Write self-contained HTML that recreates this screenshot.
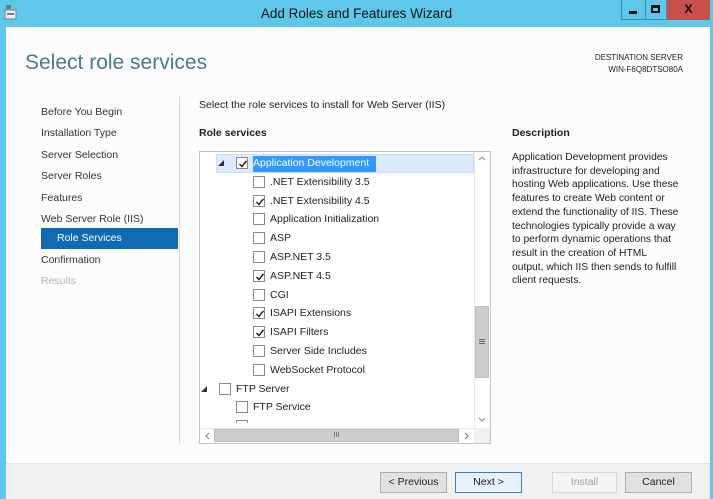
<!DOCTYPE html>
<html><head><meta charset="utf-8">
<style>
*{margin:0;padding:0;box-sizing:border-box}
body{width:713px;height:499px;overflow:hidden;background:#5fc8ea;font-family:"Liberation Sans",sans-serif;font-size:10.5px;color:#1e1e1e;position:relative}
.a{position:absolute;white-space:nowrap}
.cb{position:absolute;width:12px;height:12px;border:1px solid #8a8a8a;background:#fff}
.cb svg{position:absolute;left:1px;top:1px}
.btn{position:absolute;height:21px;border:1px solid #adadad;background:#e1e1e1;text-align:center;line-height:19px;font-size:10.5px}
</style></head><body>
<div class="a" style="left:0;top:0;width:713px;height:27px;background:#5fc8ea"></div>
<svg class="a" style="left:4px;top:4px" width="14" height="16"><rect x="2" y="1" width="5" height="4" fill="#6a7f8e"/><rect x="1" y="6" width="11" height="9" fill="#e9eef2" stroke="#6a7f8e"/><rect x="3" y="9" width="7" height="2" fill="#6a7f8e"/></svg>
<div class="a" style="left:0;top:6px;width:713px;text-align:center;font-size:13.5px;color:#111">Add Roles and Features Wizard</div>
<div class="a" style="left:621px;top:0;width:25px;height:20px;background:#5fc8ea;border:1px solid #3a8fb0;border-top:0"></div>
<div class="a" style="left:629px;top:11px;width:8px;height:3px;background:#111"></div>
<div class="a" style="left:645px;top:0;width:22px;height:20px;border:1px solid #3a8fb0;border-top:0"></div>
<div class="a" style="left:651px;top:5px;width:9px;height:8px;border:2px solid #111;border-top-width:3px"></div>
<div class="a" style="left:667px;top:0;width:43px;height:20px;background:#c7504a;color:#111;font-weight:bold;font-size:12px;text-align:center;line-height:18px">X</div>
<div class="a" style="left:6px;top:27px;width:704px;height:472px;background:#fcfcfc"></div>
<div class="a" style="left:6px;top:463px;width:704px;height:36px;background:#f0f0f0;border-top:1px solid #e3e3e3"></div>
<div class="a" style="left:25px;top:51px;font-size:21px;color:#4a7a8c">Select role services</div>
<div class="a" style="right:30px;top:52px;font-size:8px;text-align:right;line-height:12px;color:#222">DESTINATION SERVER<br>WIN-F6Q8DTSO80A</div>
<div class="a" style="left:41px;top:102px;line-height:21.4px;color:#333">Before You Begin<br>Installation Type<br>Server Selection<br>Server Roles<br>Features<br>Web Server Role (IIS)</div>
<div class="a" style="left:41px;top:228px;width:137px;height:21px;background:#0f6ab4;color:#fff;padding-left:16px;line-height:21px">Role Services</div>
<div class="a" style="left:41px;top:254px;color:#333">Confirmation</div>
<div class="a" style="left:41px;top:275px;color:#b5b5b5">Results</div>
<div class="a" style="left:179px;top:98px;width:1px;height:346px;background:#d8d8d8"></div>
<div class="a" style="left:199px;top:99px">Select the role services to install for Web Server (IIS)</div>
<div class="a" style="left:199px;top:127px;font-weight:bold">Role services</div>
<div class="a" style="left:512px;top:127px;font-weight:bold">Description</div>
<div class="a" style="left:512px;top:151px;line-height:13.7px;font-size:10.3px">Application Development provides<br>infrastructure for developing and<br>hosting Web applications. Use these<br>features to create Web content or<br>extend the functionality of IIS. These<br>technologies typically provide a way<br>to perform dynamic operations that<br>result in the creation of HTML<br>output, which IIS then sends to fulfill<br>client requests.</div>
<div class="a" style="left:199px;top:151px;width:292px;height:293px;border:1px solid #c4c4c4;background:#fff;overflow:hidden">
 <div class="a" style="left:16px;top:2px;width:258px;height:19px;background:#dcebfc;border:1px solid #c5ddf8"></div>
 <div class="a" style="left:53px;top:4px;height:16px;background:#3399ff;width:123px"></div>
</div>
<div id="rows"></div>
<div class="a" style="left:474px;top:152px;width:16px;height:276px;background:#fff;border-left:1px solid #e6e6e6"></div>
<div class="a" style="left:475px;top:306px;width:14px;height:72px;background:#cdcdcd;border:1px solid #bdbdbd"></div>
<div class="a" style="left:479px;top:339px;width:6px;height:5px;border-top:1px solid #666;border-bottom:1px solid #666"><div style="margin-top:1px;height:1px;background:#666"></div></div>
<svg class="a" style="left:477px;top:154px" width="10" height="8"><path d="M2 6 L5 3 L8 6" stroke="#888" fill="none"/></svg>
<svg class="a" style="left:477px;top:416px" width="10" height="8"><path d="M2 2 L5 5 L8 2" stroke="#888" fill="none"/></svg>
<div class="a" style="left:200px;top:428px;width:290px;height:15px;background:#fff;border-top:1px solid #e6e6e6"></div>
<div class="a" style="left:474px;top:428px;width:16px;height:15px;background:#f0f0f0"></div>
<div class="a" style="left:214px;top:429px;width:245px;height:13px;background:#cdcdcd;border:1px solid #bdbdbd;text-align:center;font-size:7px;line-height:11px;color:#555">III</div>
<svg class="a" style="left:203px;top:431px" width="8" height="10"><path d="M6 2 L3 5 L6 8" stroke="#777" fill="none"/></svg>
<svg class="a" style="left:463px;top:431px" width="8" height="10"><path d="M2 2 L5 5 L2 8" stroke="#777" fill="none"/></svg>
<div class="btn" style="left:380px;top:472px;width:67px">&lt; Previous</div>
<div class="btn" style="left:455px;top:472px;width:67px;border-color:#3c7fb1;background:#e5f1fb">Next &gt;</div>
<div class="btn" style="left:552px;top:472px;width:65px;color:#a0a0a0;background:#f4f4f4;border-color:#d6d6d6">Install</div>
<div class="btn" style="left:625px;top:472px;width:67px">Cancel</div>
<script>
var rows=[[1,1,'Application Development',1],[2,0,'.NET Extensibility 3.5'],[2,1,'.NET Extensibility 4.5'],[2,0,'Application Initialization'],[2,0,'ASP'],[2,0,'ASP.NET 3.5'],[2,1,'ASP.NET 4.5'],[2,0,'CGI'],[2,1,'ISAPI Extensions'],[2,1,'ISAPI Filters'],[2,0,'Server Side Includes'],[2,0,'WebSocket Protocol'],[0,0,'FTP Server',1],[1,0,'FTP Service'],[1,0,'FTP Extensibility']];
var h='';
var ck='<svg width="10" height="10"><path d="M1.5 5 L4 7.5 L8.5 1.8" stroke="#222" stroke-width="1.5" fill="none"/></svg>';
for(var i=0;i<rows.length;i++){var r=rows[i];var cy=163+i*18.8;var cx=r[0]==0?219:r[0]==1?236:253;
 if(r[3]){h+='<div class="a" style="left:'+(cx-18)+'px;top:'+(cy-3)+'px;width:0;height:0;border-left:6px solid transparent;border-bottom:6px solid #333"></div>';}
 h+='<div class="cb" style="left:'+cx+'px;top:'+(cy-6)+'px;'+(i==14?'height:3px;border-bottom:0;':'')+'">'+(r[1]?ck:'')+'</div>';
 if(i<14)h+='<div class="a" style="left:'+(cx+17)+'px;top:'+(cy-6)+'px;'+(i==0?'color:#fff':'')+'">'+r[2]+'</div>';}
document.getElementById('rows').innerHTML=h;
</script>
</body></html>
